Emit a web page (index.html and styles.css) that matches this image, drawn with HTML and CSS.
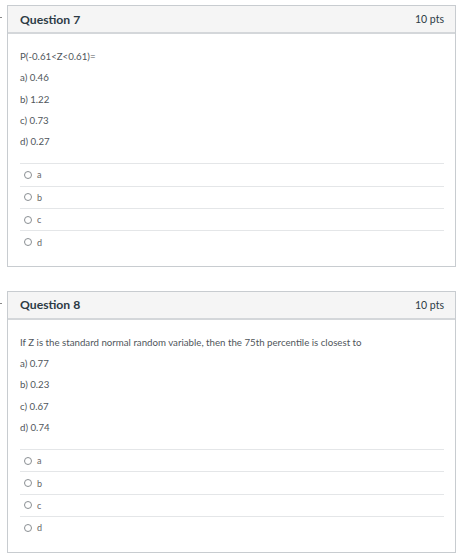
FILE: index.html
```html
<!DOCTYPE html>
<html>
<head>
<meta charset="utf-8">
<link rel="stylesheet" href="styles.css">
</head>
<body>
<div class="quiz">
  <div class="question-wrap">
    <span class="marker"></span>
    <div class="card">
      <div class="card-header">
        <span class="q-title">Question 7</span>
        <span class="q-pts">10 pts</span>
      </div>
      <div class="card-body">
        <p class="line">P(-0.61&lt;Z&lt;0.61)=</p>
        <p class="line">a) 0.46</p>
        <p class="line">b) 1.22</p>
        <p class="line">c) 0.73</p>
        <p class="line">d) 0.27</p>
        <div class="answers">
          <label class="answer"><span class="radio"></span><span class="lbl">a</span></label>
          <label class="answer"><span class="radio"></span><span class="lbl">b</span></label>
          <label class="answer"><span class="radio"></span><span class="lbl">c</span></label>
          <label class="answer"><span class="radio"></span><span class="lbl">d</span></label>
        </div>
      </div>
    </div>
  </div>
  <div class="question-wrap">
    <span class="marker"></span>
    <div class="card">
      <div class="card-header">
        <span class="q-title">Question 8</span>
        <span class="q-pts">10 pts</span>
      </div>
      <div class="card-body">
        <p class="line">If Z is the standard normal random variable, then the 75th percentile is closest to</p>
        <p class="line">a) 0.77</p>
        <p class="line">b) 0.23</p>
        <p class="line">c) 0.67</p>
        <p class="line">d) 0.74</p>
        <div class="answers">
          <label class="answer"><span class="radio"></span><span class="lbl">a</span></label>
          <label class="answer"><span class="radio"></span><span class="lbl">b</span></label>
          <label class="answer"><span class="radio"></span><span class="lbl">c</span></label>
          <label class="answer"><span class="radio"></span><span class="lbl">d</span></label>
        </div>
      </div>
    </div>
  </div>
</div>
</body>
</html>
```
FILE: styles.css
```css
html, body {
  margin: 0;
  padding: 0;
  background: #ffffff;
}
body {
  font-family: Lato, "Liberation Sans", sans-serif;
  color: #4a4f53;
}
.quiz {
  display: flex;
  flex-direction: column;
  gap: 24px;
  padding-top: 5px;
}
.question-wrap {
  position: relative;
  padding-left: 7px;
}
.marker {
  position: absolute;
  left: 0;
  top: 12px;
  width: 2px;
  height: 1px;
  background: #888;
}
.card {
  width: 447px;
  border: 1px solid #c8ccd0;
  background: #fff;
}
.card-header {
  height: 26px;
  background: #f5f5f5;
  border-bottom: 2px solid #d4d7da;
  display: flex;
  align-items: center;
  justify-content: space-between;
  padding: 0 11px 0 12px;
}
.q-title {
  font-size: 12.2px;
  font-weight: 700;
  color: #2d3b45;
}
.q-pts {
  font-size: 10.5px;
  color: #2d3b45;
}
.card-body {
  padding: 16px 11px 13px 12px;
}
.line {
  margin: 0 0 8.3px 0;
  font-size: 9.7px;
  line-height: 13px;
  color: #4f565b;
}
.answers {
  margin-top: 15px;
  border-top: 1px solid #e4e6e8;
}
.answer {
  display: flex;
  align-items: center;
  gap: 5px;
  height: 21.4px;
  padding-left: 4px;
  border-bottom: 1px solid #e4e6e8;
  font-size: 9px;
  color: #666;
}
.answer:last-child {
  border-bottom: none;
}
.radio {
  width: 6px;
  height: 6px;
  border: 1px solid #8a8f93;
  border-radius: 50%;
}
```
